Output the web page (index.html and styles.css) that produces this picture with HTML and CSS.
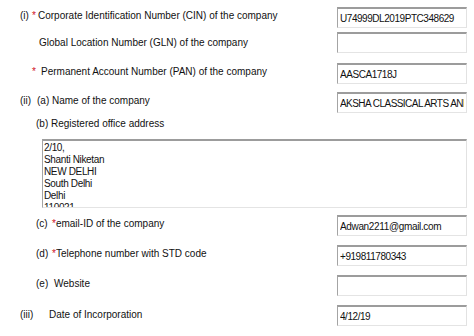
FILE: index.html
```html
<!DOCTYPE html>
<html>
<head>
<meta charset="utf-8">
<link rel="stylesheet" href="styles.css">
</head>
<body>
<div class="form">
  <div class="row">
    <div class="label"><span class="num w12">(i)</span><span class="star w6">*</span>Corporate Identification Number (CIN) of the company</div>
    <input class="field" type="text" value="U74999DL2019PTC348629" readonly>
  </div>
  <div class="row mt4">
    <div class="label low"><span class="num w19"></span>Global Location Number (GLN) of the company</div>
    <input class="field" type="text" value="" readonly>
  </div>
  <div class="row mt10">
    <div class="label"><span class="num w12"></span><span class="star w9">*</span>Permanent Account Number (PAN) of the company</div>
    <input class="field" type="text" value="AASCA1718J" readonly>
  </div>
  <div class="row mt8">
    <div class="label"><span class="num w17">(ii)</span>(a) Name of the company</div>
    <input class="field tight" type="text" value="AKSHA CLASSICAL ARTS AND CULTURE FOUNDATION" readonly>
  </div>
  <div class="row-label mt2">
    <div class="label"><span class="num w16"></span>(b) Registered office address</div>
  </div>
  <textarea class="address mt6" readonly>2/10,
Shanti Niketan
NEW DELHI
South Delhi
Delhi
110021</textarea>
  <div class="row mt7">
    <div class="label"><span class="num w16"></span><span class="sub w16">(c)</span><span class="star">*</span>email-ID of the company</div>
    <input class="field spaced" type="text" value="Adwan2211@gmail.com" readonly>
  </div>
  <div class="row mt9">
    <div class="label"><span class="num w16"></span><span class="sub w16">(d)</span><span class="star">*</span>Telephone number with STD code</div>
    <input class="field" type="text" value="+919811780343" readonly>
  </div>
  <div class="row mt9">
    <div class="label"><span class="num w16"></span><span class="sub w18">(e)</span>Website</div>
    <input class="field" type="text" value="" readonly>
  </div>
  <div class="row mt9">
    <div class="label low1"><span class="num w29">(iii)</span>Date of Incorporation</div>
    <input class="field" type="text" value="4/12/19" readonly>
  </div>
</div>
</body>
</html>
```
FILE: styles.css
```css
html, body {
  margin: 0;
  padding: 0;
  background: #ffffff;
}

.form {
  width: 474px;
  padding: 7px 7px 0 0;
  box-sizing: border-box;
  font-family: "Liberation Sans", Arial, Helvetica, sans-serif;
  font-size: 10px;
  color: #111111;
}

.row {
  display: flex;
  align-items: flex-start;
  height: 21px;
}

.row-label {
  display: flex;
  height: 18px;
}

.label {
  flex: 1;
  display: flex;
  padding-left: 20px;
  line-height: 18px;
  white-space: nowrap;
}

.label.low {
  padding-top: 2px;
}

.label.low1 {
  padding-top: 1px;
}

.num, .sub, .star {
  display: inline-block;
  flex: none;
}

.star {
  color: #d0141e;
}

.w6 { width: 6px; }
.w9 { width: 9px; }
.w12 { width: 12px; }
.w16 { width: 16px; }
.w17 { width: 17px; }
.w18 { width: 18px; }
.w19 { width: 19px; }
.w29 { width: 29px; }

.mt2 { margin-top: 2px; }
.mt4 { margin-top: 4px; }
.mt6 { margin-top: 6px; }
.mt7 { margin-top: 7px; }
.mt8 { margin-top: 8px; }
.mt9 { margin-top: 9px; }
.mt10 { margin-top: 10px; }

.field {
  flex: none;
  box-sizing: border-box;
  width: 130px;
  height: 21px;
  margin: 0;
  padding: 0 2px;
  border-top: 2px solid #9c9c9c;
  border-left: 1px solid #a4a4a4;
  border-right: 1px solid #e2e2e2;
  border-bottom: 1px solid #e4e4e4;
  border-radius: 0;
  outline: none;
  background: #ffffff;
  font-family: "Liberation Sans", Arial, sans-serif;
  font-size: 10px;
  letter-spacing: -0.45px;
  color: #111111;
}

.field.spaced {
  letter-spacing: -0.35px;
}

.field.tight {
  letter-spacing: -0.55px;
}

.address {
  display: block;
  box-sizing: border-box;
  width: 425px;
  height: 69px;
  margin-left: 42px;
  margin-bottom: 0;
  margin-right: 0;
  padding: 1px 1px 0;
  border-top: 2px solid #9c9c9c;
  border-left: 1px solid #a4a4a4;
  border-right: 1px solid #e2e2e2;
  border-bottom: 1px solid #e4e4e4;
  border-radius: 0;
  outline: none;
  resize: none;
  overflow: hidden;
  background: #ffffff;
  font-family: "Liberation Sans", Arial, sans-serif;
  font-size: 10px;
  letter-spacing: -0.35px;
  line-height: 12px;
  color: #111111;
}
```
